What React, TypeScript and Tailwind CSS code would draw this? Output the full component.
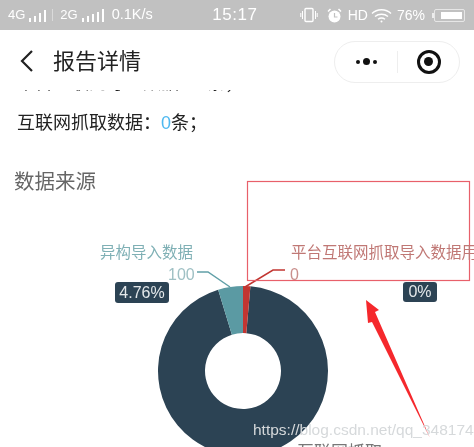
function Bars({ heights }: { heights: number[] }) {
  return (
    <span className="flex items-end gap-[3px] h-[13px]">
      {heights.map((h, i) => (
        <span key={i} className="w-[2px] bg-white" style={{ height: h }} />
      ))}
    </span>
  );
}

function arc(cx: number, cy: number, R: number, r: number, a0: number, a1: number) {
  const p = (rad: number, a: number) => {
    const t = ((a - 90) * Math.PI) / 180;
    return `${(cx + rad * Math.cos(t)).toFixed(2)} ${(cy + rad * Math.sin(t)).toFixed(2)}`;
  };
  const large = a1 - a0 > 180 ? 1 : 0;
  return `M${p(R, a0)}A${R} ${R} 0 ${large} 1 ${p(R, a1)}L${p(r, a1)}A${r} ${r} 0 ${large} 0 ${p(r, a0)}Z`;
}

export default function App() {
  return (
    <div className="relative w-[474px] h-[447px] overflow-hidden bg-white font-['Liberation_Sans','Noto_Sans_CJK_SC',sans-serif] blur-[0.5px]">
      {/* status bar */}
      <div className="h-[30px] bg-[#c1c1c1] text-white flex items-center justify-between pl-[8px] pr-[9px] text-[13px]">
        <div className="flex items-center w-[170px]">
          <span>4G</span>
          <span className="ml-[4px]"><Bars heights={[4, 6, 9, 12]} /></span>
          <span className="ml-[6px] w-px h-[12px] bg-white/40" />
          <span className="ml-[7px]">2G</span>
          <span className="ml-[4px]"><Bars heights={[4, 6, 8, 10, 13]} /></span>
          <span className="ml-[8px] text-[14.5px]">0.1K/s</span>
        </div>
        <span className="text-[17px] tracking-[0.5px] -ml-[8px]">15:17</span>
        <div className="flex items-center gap-[6px]">
          <svg width="18" height="16" viewBox="0 0 18 16" fill="none" stroke="white" strokeWidth="1.4">
            <rect x="5" y="1.5" width="8" height="13" rx="1" />
            <path d="M2.5 4v8M.8 6v4M15.5 4v8M17.2 6v4" strokeWidth="1" />
          </svg>
          <svg className="ml-[3px]" width="15" height="15" viewBox="0 0 15 15">
            <circle cx="7.5" cy="8.5" r="6" fill="white" />
            <path d="M7.5 5v4h3" stroke="#c1c1c1" strokeWidth="1.2" fill="none" />
            <path d="M1 3.5 3.5 1M14 3.5 11.5 1" stroke="white" strokeWidth="1.5" />
          </svg>
          <span className="text-[14px]">HD</span>
          <svg className="-ml-[3px]" width="21" height="15" viewBox="0 0 21 15" fill="none" stroke="white" strokeWidth="1.4">
            <path d="M1 5.5C6 .5 15 .5 20 5.5M4 8.5c3.500-3 9.500-3 13 0M7 11.300c2-1.500 5-1.500 7 0" />
            <circle cx="10.500" cy="13.500" r="1" fill="white" stroke="none" />
          </svg>
          <span className="text-[14px] -ml-[1px]">76%</span>
          <span className="flex items-center ml-[1px]">
            <span className="w-[2px] h-[5px] bg-white/70" />
            <span className="w-[31px] h-[13px] border border-white/60 rounded-[2px] p-[2px] pl-[6px] flex">
              <span className="flex-1 bg-white" />
            </span>
          </span>
        </div>
      </div>

      {/* navigation bar */}
      <div className="h-[60px] flex items-center bg-white relative z-10">
        <svg className="ml-[19px] mt-[2px]" width="15" height="24" viewBox="0 0 15 24" fill="none" stroke="#222" strokeWidth="2.2">
          <path d="M13 2 3 12l10 10" />
        </svg>
        <span className="ml-[19px] mt-[3px] text-[22px] leading-none text-[#222]">报告详情</span>
        <div className="ml-auto mr-[14px] w-[126px] h-[42px] mt-[3px] rounded-full border border-[#eeeeee] flex items-center">
          <div className="w-[62px] flex items-center justify-center gap-[3px]">
            <span className="w-[4px] h-[4px] rounded-full bg-[#111]" />
            <span className="w-[7px] h-[7px] rounded-full bg-[#111]" />
            <span className="w-[4px] h-[4px] rounded-full bg-[#111]" />
          </div>
          <span className="w-px h-[22px] bg-[#eeeeee]" />
          <div className="flex-1 flex items-center justify-center">
            <span className="w-[24px] h-[24px] rounded-full border-[3px] border-[#111] flex items-center justify-center">
              <span className="w-[9px] h-[9px] rounded-full bg-[#111]" />
            </span>
          </div>
        </div>
      </div>

      {/* scrolled content */}
      <div className="h-[357px] overflow-hidden">
        <p className="pl-[17px] text-[18px] leading-[24px] text-[#222] -mt-[19px]">平台互联网导入数据：<span className="text-[#4db8f0]">0</span>条；</p>
        <p className="pl-[17px] text-[18px] leading-[24px] text-[#222] mt-[16px]">互联网抓取数据：<span className="text-[#4db8f0]">0</span>条；</p>
        <h2 className="pl-[14px] mt-[34px] text-[20.5px] leading-[26px] font-normal text-[#666]">数据来源</h2>
      </div>

      {/* chart */}
      <svg className="absolute left-0 top-0" width="474" height="447" viewBox="0 0 474 447">
        <path d={arc(243, 371, 85, 38, 5, 343)} fill="#2c4354" />
        <path d={arc(243, 371, 85, 38, 343, 360)} fill="#5b9aa3" />
        <path d={arc(243, 371, 85, 38, 0, 5)} fill="#c23531" />
        <path d="M197 272h11l22 15" fill="none" stroke="#61a0a8" strokeWidth="1.5" />
        <path d="M285 270h-12l-28 17" fill="none" stroke="#c23531" strokeWidth="1.5" />
        <rect x="247.500" y="181.500" width="222" height="99" fill="none" stroke="#e8606a" strokeWidth="1.2" />
        <path d="M366 300 379 310 375 312 430 438 372 322 368 323Z" fill="#f5282c" />
      </svg>

      <span className="absolute left-[100px] top-[244px] text-[15.5px] leading-[18px] text-[#7fb0b5] whitespace-nowrap">异构导入数据</span>
      <span className="absolute left-[168px] top-[266px] text-[16px] leading-[18px] text-[#9fc0c4]">100</span>
      <span className="absolute left-[115px] top-[282px] w-[54px] h-[21px] rounded-[3px] bg-[#2c4354] text-[#e4e8ea] text-[16px] leading-[21px] text-center">4.76%</span>

      <span className="absolute left-[291px] top-[244px] text-[15.5px] leading-[18px] text-[#c07875] whitespace-nowrap">平台互联网抓取导入数据用</span>
      <span className="absolute left-[290px] top-[266px] text-[16px] leading-[18px] text-[#c98f8c]">0</span>
      <span className="absolute left-[403px] top-[282px] w-[34px] h-[20px] rounded-[3px] bg-[#2c4354] text-[#e4e8ea] text-[16px] leading-[20px] text-center">0%</span>

      <span className="absolute left-[297px] top-[443px] text-[17px] leading-[20px] text-[#777] whitespace-nowrap">互联网抓取</span>
      <span className="absolute left-[253px] top-[420px] text-[15.5px] leading-[20px] text-[#d6d9db] whitespace-nowrap">https://blog.csdn.net/qq_34817440</span>
    </div>
  );
}
